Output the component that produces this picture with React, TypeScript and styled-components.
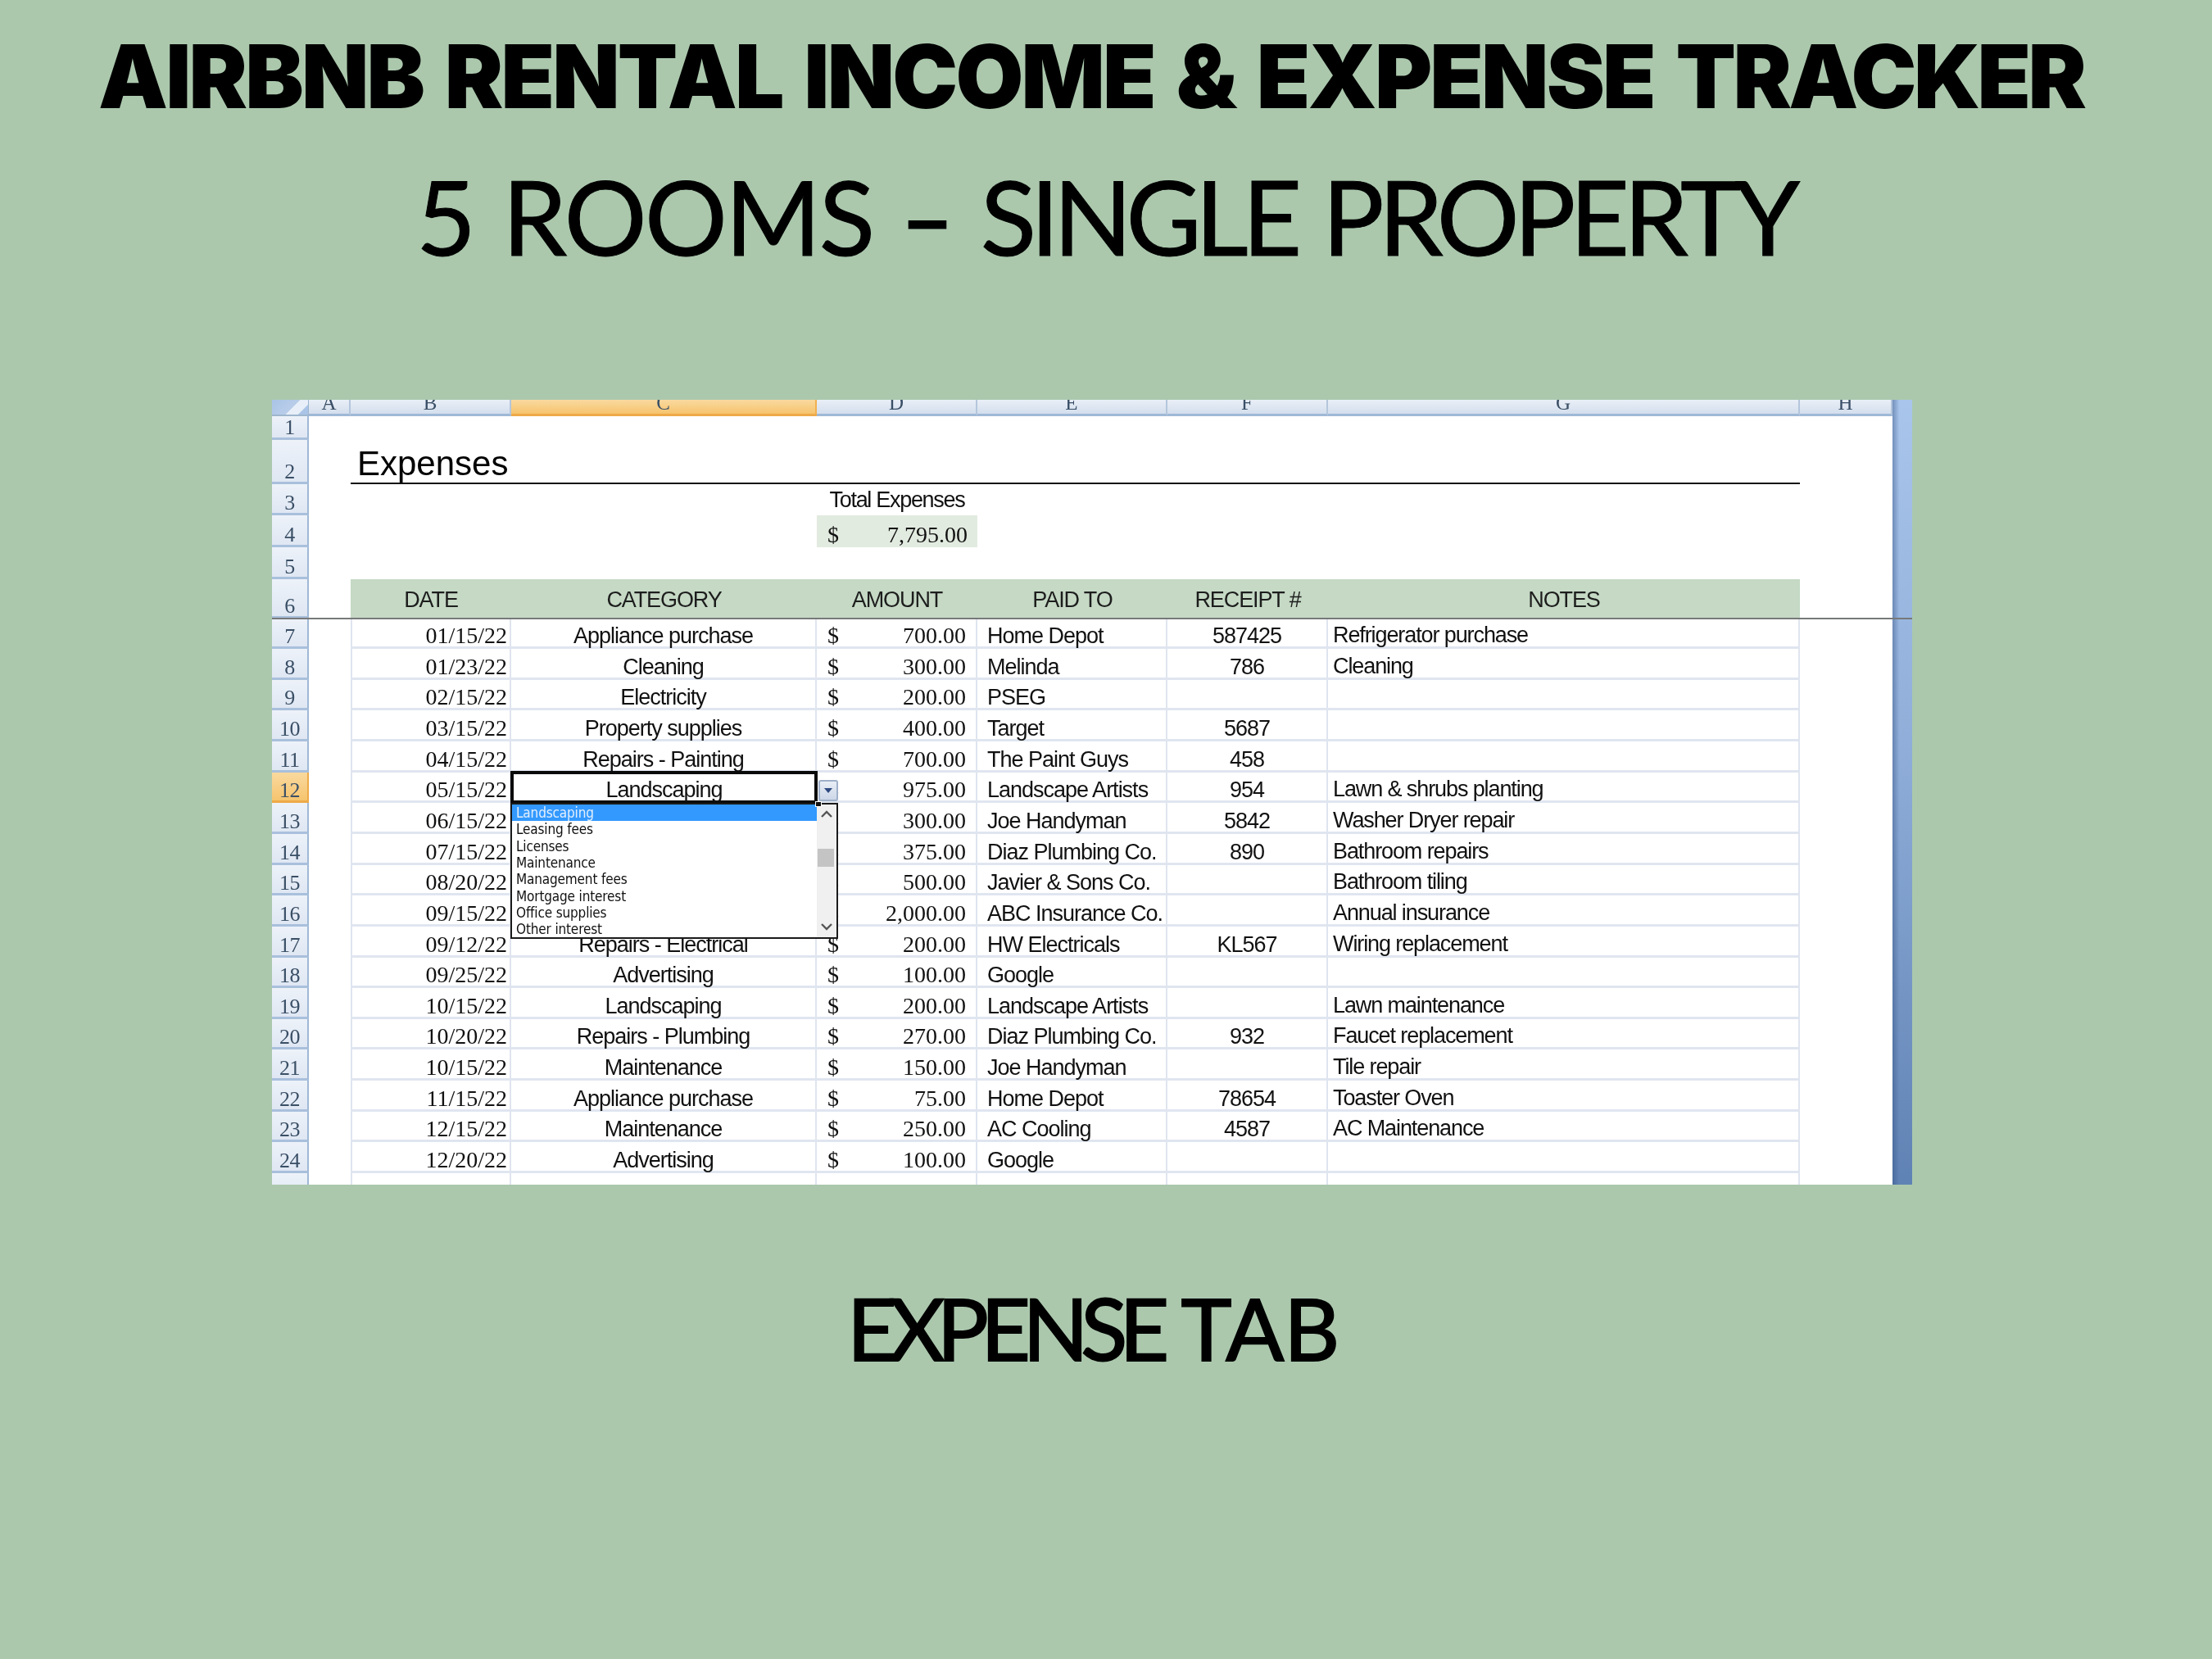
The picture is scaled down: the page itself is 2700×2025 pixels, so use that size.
import React from "react";
import styled, { createGlobalStyle } from "styled-components";

const Global = createGlobalStyle`
  html, body { margin: 0; padding: 0; background: #abc8ad; }
  #root { width: 2700px; height: 2025px; overflow: hidden; }
`;

const SANS = `"Liberation Sans", Arial, sans-serif`;
const SERIF = `"Liberation Serif", "Times New Roman", serif`;

const Page = styled.div`
  width: 2700px;
  height: 2025px;
  background: #abc8ad;
  display: flex;
  flex-direction: column;
  color: #000;
`;

const Title = styled.h1`
  margin: 40px 0 0 120px;
  height: 106px;
  font: 900 107px/106px Inter, ${SANS};
  letter-spacing: -2.8px;
  word-spacing: 8.2px;
  white-space: nowrap;
`;

const Subtitle = styled.h2`
  margin: 58px 0 0 508px;
  height: 120px;
  font: 400 126px/120px Lato, ${SANS};
  -webkit-text-stroke: 1px #000;
  white-space: nowrap;
`;

const Word = styled.span<{ $ls: number }>`
  letter-spacing: ${(p) => p.$ls}px;
`;

const Dash = styled.span`
  display: inline-block;
  margin-right: 20px;
  transform: scaleX(1.45);
  transform-origin: left center;
`;

const Sheet = styled.div`
  position: relative;
  margin: 164px 0 0 332px;
  width: 2002px;
  height: 957.5px;
  display: flex;
  overflow: hidden;
  background: #fff;
  filter: blur(0.45px);
`;

const Grid = styled.div`
  display: grid;
  grid-template-columns: 45px 51px 196px 373px 196px 232px 196px 576px 113px;
  grid-template-rows: 19.5px 29.5px 53.5px 38px 39px 39.5px 47.5px repeat(19, 37.65px);
  flex: 0 0 1978px;
`;

const ScrollEdge = styled.div`
  flex: 1;
  background:
    linear-gradient(90deg, rgba(50, 80, 130, 0.45) 0%, rgba(50, 80, 130, 0) 35%),
    linear-gradient(180deg, #a9c5ec 0%, #8fadd8 45%, #5f82b4 100%);
`;

const Corner = styled.div`
  background: linear-gradient(135deg, #a9c4e6 0%, #b9cde9 55%, #e8eff8 56%, #e8eff8 80%, #a9c4e6 81%);
  border-right: 1px solid #9eb6ce;
  border-bottom: 2px solid #9eb6ce;
`;

const ColHead = styled.div<{ $active?: boolean }>`
  overflow: hidden;
  box-sizing: border-box;
  text-align: center;
  font: 400 25px/8px ${SERIF};
  color: #3a4f66;
  border-right: 2px solid ${(p) => (p.$active ? "#f0b050" : "#b4c6dc")};
  border-bottom: 3px solid ${(p) => (p.$active ? "#eeaa48" : "#9fb8d6")};
  background: ${(p) =>
    p.$active
      ? "linear-gradient(180deg, #f9d99f 0%, #f6c46e 100%)"
      : "linear-gradient(180deg, #eaeff7 0%, #d3deed 100%)"};
`;

const RowHead = styled.div<{ $active?: boolean }>`
  box-sizing: border-box;
  display: flex;
  align-items: flex-end;
  justify-content: center;
  font: 400 26px/25px ${SERIF};
  letter-spacing: -0.5px;
  color: #3a4f66;
  border-right: 2px solid ${(p) => (p.$active ? "#eeaa48" : "#9fb8d6")};
  border-bottom: 3px solid ${(p) => (p.$active ? "#eeaa48" : "#a9c0dc")};
  background: ${(p) =>
    p.$active
      ? "linear-gradient(180deg, #f9d99f 0%, #f6c46e 100%)"
      : "linear-gradient(180deg, #edf2f9 0%, #dfe7f3 100%)"};
`;

const Blank = styled.div`
  background: #fff;
`;

const SheetTitle = styled.div`
  grid-column: span 6;
  box-sizing: border-box;
  display: flex;
  align-items: flex-end;
  padding-left: 8px;
  font: 400 42px/46px ${SANS};
  color: #000;
  border-bottom: 2px solid #111;
`;

const Span = styled.div<{ $n: number }>`
  grid-column: span ${(p) => p.$n};
`;

const TotalLabel = styled.div`
  box-sizing: border-box;
  display: flex;
  align-items: flex-end;
  justify-content: center;
  padding-bottom: 4px;
  white-space: nowrap;
  font: 400 27px/30px ${SANS};
  letter-spacing: -1.3px;
  color: #111;
`;

const TotalValue = styled.div`
  box-sizing: border-box;
  display: flex;
  align-items: flex-end;
  justify-content: space-between;
  padding: 0 12px 0 13px;
  font: 400 28px/30px ${SERIF};
  color: #111;
  background: #e2ebe0;
`;

const TableHead = styled.div`
  box-sizing: border-box;
  display: flex;
  align-items: flex-end;
  justify-content: center;
  padding-bottom: 8px;
  white-space: nowrap;
  font: 400 27px/30px ${SANS};
  letter-spacing: -1.1px;
  color: #1d1d1d;
  background: #c5d9c5;
`;

const Cell = styled.div`
  box-sizing: border-box;
  border-right: 2px solid #dfe5ef;
  border-bottom: 3px solid #e0e6f0;
  display: flex;
  align-items: flex-end;
  white-space: nowrap;
  overflow: visible;
  color: #111;
  background: #fff;
`;

const DateCell = styled(Cell)`
  border-left: 2px solid #dfe5ef;
  justify-content: flex-end;
  padding-right: 3px;
  font: 400 28px/27px ${SERIF};
`;

const CategoryCell = styled(Cell)`
  justify-content: center;
  font: 400 27px/26px ${SANS};
  letter-spacing: -1px;
`;

const AmountCell = styled(Cell)`
  justify-content: space-between;
  padding-left: 13px;
  padding-right: 12px;
  font: 400 28px/27px ${SERIF};
  color: #111;
`;

const VendorCell = styled(Cell)`
  padding-left: 12px;
  font: 400 27px/26px ${SANS};
  letter-spacing: -1px;
`;

const ReceiptCell = styled(Cell)`
  justify-content: center;
  font: 400 27px/26px ${SANS};
  letter-spacing: -1px;
`;

const NoteCell = styled(Cell)`
  padding-left: 6px;
  padding-bottom: 1px;
  font: 400 27px/26px ${SANS};
  letter-spacing: -1.1px;
`;

const FreezeLine = styled.div`
  position: absolute;
  left: 0;
  right: 0;
  top: 265.5px;
  height: 2px;
  background: #77797a;
`;

const ActiveCell = styled.div`
  position: absolute;
  left: 291px;
  top: 453px;
  width: 375px;
  height: 40px;
  box-sizing: border-box;
  border: 4px solid #0a0a0a;
  background: #fff;
  display: flex;
  align-items: flex-end;
  justify-content: center;
  font: 400 27px/26px ${SANS};
  letter-spacing: -1px;
  color: #111;
`;

const DropButton = styled.div`
  position: absolute;
  left: 667px;
  top: 464px;
  width: 24px;
  height: 26px;
  box-sizing: border-box;
  border: 2px solid #9fb0c9;
  border-radius: 3px;
  background: linear-gradient(180deg, #e9eef6 0%, #ccd7e8 100%);
  display: flex;
  align-items: center;
  justify-content: center;
`;

const ListBox = styled.div`
  position: absolute;
  left: 291px;
  top: 492px;
  width: 400px;
  height: 166px;
  box-sizing: border-box;
  border: 2px solid #1a1a1a;
  background: #fff;
  display: flex;
`;

const ListItems = styled.div`
  flex: 1;
  overflow: hidden;
`;

const ListItem = styled.div<{ $selected?: boolean }>`
  height: 20.35px;
  padding-left: 5px;
  font: 400 17px/21px "DejaVu Sans Condensed", "DejaVu Sans", sans-serif;
  letter-spacing: -0.15px;
  white-space: nowrap;
  color: ${(p) => (p.$selected ? "#e3effc" : "#111")};
  background: ${(p) => (p.$selected ? "#3399ff" : "transparent")};
`;

const ScrollTrack = styled.div`
  position: relative;
  flex: 0 0 24px;
  background: #f0f0f0;
  display: flex;
  flex-direction: column;
  justify-content: space-between;
  align-items: center;
  padding: 7px 0 8px;
  box-sizing: border-box;
`;

const ScrollThumb = styled.div`
  position: absolute;
  left: 1px;
  right: 3px;
  top: 54px;
  height: 22px;
  background: #c4c4c4;
`;

const FillHandle = styled.div`
  position: absolute;
  left: 663px;
  top: 490px;
  width: 6px;
  height: 5px;
  background: #111;
  border: 1px solid #fff;
`;

const TabLabel = styled.h3`
  margin: 124px 0 0 1034px;
  height: 100px;
  font: 400 105px/100px Lato, ${SANS};
  -webkit-text-stroke: 2px #000;
  white-space: nowrap;
`;

const Chevron = ({ up }: { up?: boolean }) => (
  <svg width="16" height="10" viewBox="0 0 16 10">
    <path
      d={up ? "M2 8 L8 2 L14 8" : "M2 2 L8 8 L14 2"}
      fill="none"
      stroke="#555"
      strokeWidth="2.4"
    />
  </svg>
);

type Row = [string, string, string, string, string, string];

const rows: Row[] = [
  ["01/15/22", "Appliance purchase", "700.00", "Home Depot", "587425", "Refrigerator purchase"],
  ["01/23/22", "Cleaning", "300.00", "Melinda", "786", "Cleaning"],
  ["02/15/22", "Electricity", "200.00", "PSEG", "", ""],
  ["03/15/22", "Property supplies", "400.00", "Target", "5687", ""],
  ["04/15/22", "Repairs - Painting", "700.00", "The Paint Guys", "458", ""],
  ["05/15/22", "", "975.00", "Landscape Artists", "954", "Lawn & shrubs planting"],
  ["06/15/22", "", "300.00", "Joe Handyman", "5842", "Washer Dryer repair"],
  ["07/15/22", "", "375.00", "Diaz Plumbing Co.", "890", "Bathroom repairs"],
  ["08/20/22", "", "500.00", "Javier & Sons Co.", "", "Bathroom tiling"],
  ["09/15/22", "", "2,000.00", "ABC Insurance Co.", "", "Annual insurance"],
  ["09/12/22", "Repairs - Electrical", "200.00", "HW Electricals", "KL567", "Wiring replacement"],
  ["09/25/22", "Advertising", "100.00", "Google", "", ""],
  ["10/15/22", "Landscaping", "200.00", "Landscape Artists", "", "Lawn maintenance"],
  ["10/20/22", "Repairs - Plumbing", "270.00", "Diaz Plumbing Co.", "932", "Faucet replacement"],
  ["10/15/22", "Maintenance", "150.00", "Joe Handyman", "", "Tile repair"],
  ["11/15/22", "Appliance purchase", "75.00", "Home Depot", "78654", "Toaster Oven"],
  ["12/15/22", "Maintenance", "250.00", "AC Cooling", "4587", "AC Maintenance"],
  ["12/20/22", "Advertising", "100.00", "Google", "", ""],
];

const columns = ["A", "B", "C", "D", "E", "F", "G", "H"];
const heads = ["DATE", "CATEGORY", "AMOUNT", "PAID TO", "RECEIPT #", "NOTES"];
const listOptions = [
  "Landscaping",
  "Leasing fees",
  "Licenses",
  "Maintenance",
  "Management fees",
  "Mortgage interest",
  "Office supplies",
  "Other interest",
];

export default function App() {
  return (
    <Page>
      <Global />
      <Title>
        AIRBNB RENTAL INCOME &amp; EXPENSE <Word $ls={-3.6}>TRACKER</Word>
      </Title>
      <Subtitle>
        5 <Word $ls={-2.6}>ROOMS</Word> <Dash>-</Dash> <Word $ls={-7.4}>SINGLE</Word> <Word $ls={-7}>PROPERTY</Word>
      </Subtitle>
      <Sheet>
        <Grid>
          <Corner />
          {columns.map((c) => (
            <ColHead key={c} $active={c === "C"}>
              {c}
            </ColHead>
          ))}

          <RowHead>1</RowHead>
          <Span $n={8} />

          <RowHead>2</RowHead>
          <Blank />
          <SheetTitle>Expenses</SheetTitle>
          <Blank />

          <RowHead>3</RowHead>
          <Span $n={3} />
          <TotalLabel>Total Expenses</TotalLabel>
          <Span $n={4} />

          <RowHead>4</RowHead>
          <Span $n={3} />
          <TotalValue>
            <span>$</span>
            <span>7,795.00</span>
          </TotalValue>
          <Span $n={4} />

          <RowHead>5</RowHead>
          <Span $n={8} />

          <RowHead>6</RowHead>
          <Blank />
          {heads.map((h) => (
            <TableHead key={h}>{h}</TableHead>
          ))}
          <Blank />

          {rows.map((r, i) => {
            const n = i + 7;
            return (
              <React.Fragment key={n}>
                <RowHead $active={n === 12}>{n}</RowHead>
                <Blank />
                <DateCell>{r[0]}</DateCell>
                <CategoryCell>{r[1]}</CategoryCell>
                <AmountCell>
                  <span>$</span>
                  <span>{r[2]}</span>
                </AmountCell>
                <VendorCell>{r[3]}</VendorCell>
                <ReceiptCell>{r[4]}</ReceiptCell>
                <NoteCell>{r[5]}</NoteCell>
                <Blank />
              </React.Fragment>
            );
          })}

          <RowHead />
          <Blank />
          <DateCell />
          <CategoryCell />
          <AmountCell />
          <VendorCell />
          <ReceiptCell />
          <NoteCell />
          <Blank />
        </Grid>
        <ScrollEdge />
        <FreezeLine />
        <ActiveCell>Landscaping</ActiveCell>
        <DropButton>
          <svg width="12" height="8" viewBox="0 0 12 8">
            <path d="M1 1 H11 L6 7 Z" fill="#2f4a80" />
          </svg>
        </DropButton>
        <ListBox>
          <ListItems>
            {listOptions.map((o, i) => (
              <ListItem key={o} $selected={i === 0}>
                {o}
              </ListItem>
            ))}
          </ListItems>
          <ScrollTrack>
            <Chevron up />
            <ScrollThumb />
            <Chevron />
          </ScrollTrack>
        </ListBox>
        <FillHandle />
      </Sheet>
      <TabLabel>
        <Word $ls={-9.5}>EXPENSE</Word> <Word $ls={0}>TAB</Word>
      </TabLabel>
    </Page>
  );
}
